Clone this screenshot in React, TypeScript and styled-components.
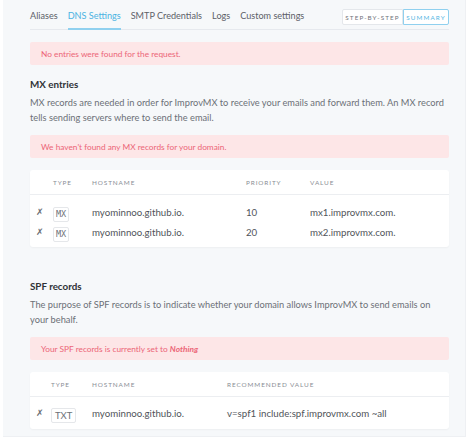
import React from "react";
import styled, { createGlobalStyle } from "styled-components";

const Global = createGlobalStyle`
  html, body { margin: 0; padding: 0; background: #ffffff; }
  body { font-family: Lato, "Liberation Sans", sans-serif; -webkit-font-smoothing: antialiased; }
`;

const Panel = styled.div`
  margin-left: 3px;
  width: 463px;
  height: 437px;
  box-sizing: border-box;
  background: #f6f8fa;
  border-right: 1px solid #eef0f3;
  border-bottom: 1px solid #eef0f3;
  padding: 0 16px 0 27px;
  overflow: hidden;
`;

const TabBar = styled.div`
  display: flex;
  align-items: flex-end;
  justify-content: space-between;
  height: 29px;
  border-bottom: 1px solid #e6e9ee;
`;

const Tabs = styled.div`
  display: flex;
  gap: 10px;
`;

const Tab = styled.div<{ $active?: boolean }>`
  font-size: 9.1px;
  line-height: 12px;
  white-space: nowrap;
  padding: 5px 0 6px;
  color: ${(p) => (p.$active ? "#4bb3e2" : "#5d6168")};
  border-bottom: 2px solid ${(p) => (p.$active ? "#8fd0ef" : "transparent")};
  margin-bottom: -1px;
`;

const Toggle = styled.div`
  display: flex;
  align-self: flex-start;
  margin-top: 9px;
`;

const ToggleBtn = styled.div<{ $active?: boolean; $w: number }>`
  width: ${(p) => p.$w}px;
  height: 16px;
  box-sizing: border-box;
  display: flex;
  align-items: center;
  justify-content: center;
  white-space: nowrap;
  font-size: 6.3px;
  letter-spacing: 1.1px;
  font-weight: 400;
  background: #ffffff;
  color: ${(p) => (p.$active ? "#52b6e3" : "#6f737a")};
  border: 1px solid ${(p) => (p.$active ? "#8fd0ef" : "#e4e7eb")};
  border-radius: ${(p) => (p.$active ? "0 2px 2px 0" : "2px 0 0 2px")};
`;

const Alert = styled.div<{ $mt: number }>`
  margin-top: ${(p) => p.$mt}px;
  background: #fde6e7;
  color: #ec6577;
  font-size: 8.3px;
  line-height: 12px;
  padding: 6px 11px;
  height: 23px;
  box-sizing: border-box;
  display: flex;
  align-items: center;
  white-space: pre;
  border-radius: 2px;
  em { font-weight: 700; }
`;

const Heading = styled.h3<{ $mt: number }>`
  margin: ${(p) => p.$mt}px 0 0;
  font-size: 9.8px;
  line-height: 14px;
  font-weight: 700;
  color: #2f3237;
`;

const Para = styled.p`
  margin: 4px 0 0;
  font-size: 9.25px;
  line-height: 15px;
  color: #6c7077;
`;

const Card = styled.div`
  margin-top: 12px;
  background: #ffffff;
  border-radius: 3px;
  box-shadow: 0 1px 2px rgba(0, 0, 0, 0.04);
  padding-bottom: 6px;
`;

const Row = styled.div<{ $cols: string; $head?: boolean }>`
  display: grid;
  grid-template-columns: ${(p) => p.$cols};
  align-items: center;
  height: ${(p) => (p.$head ? "24px" : "20px")};
  ${(p) => (p.$head ? "border-bottom: 1px solid #eceef1; margin-bottom: 6px;" : "")}
`;

const Th = styled.div`
  font-size: 6.4px;
  letter-spacing: 0.9px;
  color: #8a8e95;
  text-transform: uppercase;
  white-space: nowrap;
`;

const Td = styled.div`
  font-size: 9.7px;
  color: #50545a;
  white-space: nowrap;
`;

const Cross = styled.div`
  padding-left: 6px;
  font-size: 9px;
  color: #6a6e74;
  font-family: "DejaVu Sans", sans-serif;
`;

const Badge = styled.span`
  display: inline-block;
  font-family: "DejaVu Sans Mono", "Liberation Mono", monospace;
  font-size: 8.5px;
  line-height: 11px;
  padding: 1px 2px;
  border: 1px solid #e5e7ea;
  border-radius: 2px;
  color: #6d7177;
`;

const BadgeTxt = styled(Badge)`
  font-family: Lato, "Liberation Sans", sans-serif;
  font-size: 9.5px;
  padding: 1px 3px;
`;

const mxCols = "23px 39px 154px 64px 1fr";
const spfCols = "21px 41px 135px 1fr";

const mxRows = [
  { host: "myominnoo.github.io.", prio: "10", value: "mx1.improvmx.com." },
  { host: "myominnoo.github.io.", prio: "20", value: "mx2.improvmx.com." },
];

export default function App() {
  return (
    <>
      <Global />
      <Panel>
        <TabBar>
          <Tabs>
            <Tab>Aliases</Tab>
            <Tab $active>DNS Settings</Tab>
            <Tab>SMTP Credentials</Tab>
            <Tab>Logs</Tab>
            <Tab>Custom settings</Tab>
          </Tabs>
          <Toggle>
            <ToggleBtn $w={61}>STEP-BY-STEP</ToggleBtn>
            <ToggleBtn $w={46} $active>SUMMARY</ToggleBtn>
          </Toggle>
        </TabBar>

        <Alert $mt={12}>No entries were found for the request.</Alert>

        <Heading $mt={12}>MX entries</Heading>
        <Para>
          MX records are needed in order for ImprovMX to receive your emails and forward them. An MX record
          tells sending servers where to send the email.
        </Para>
        <Alert $mt={10}>We haven't found any MX records for your domain.</Alert>
        <Card>
          <Row $cols={mxCols} $head>
            <div />
            <Th>Type</Th>
            <Th>Hostname</Th>
            <Th>Priority</Th>
            <Th>Value</Th>
          </Row>
          {mxRows.map((r) => (
            <Row $cols={mxCols} key={r.value}>
              <Cross>✗</Cross>
              <div>
                <Badge>MX</Badge>
              </div>
              <Td>{r.host}</Td>
              <Td>{r.prio}</Td>
              <Td>{r.value}</Td>
            </Row>
          ))}
        </Card>

        <Heading $mt={32}>SPF records</Heading>
        <Para>
          The purpose of SPF records is to indicate whether your domain allows ImprovMX to send emails on
          your behalf.
        </Para>
        <Alert $mt={10}>
          Your SPF records is currently set to <em>Nothing</em>
        </Alert>
        <Card>
          <Row $cols={spfCols} $head>
            <div />
            <Th>Type</Th>
            <Th>Hostname</Th>
            <Th>Recommended value</Th>
          </Row>
          <Row $cols={spfCols}>
            <Cross>✗</Cross>
            <div>
              <BadgeTxt>TXT</BadgeTxt>
            </div>
            <Td>myominnoo.github.io.</Td>
            <Td>v=spf1 include:spf.improvmx.com ~all</Td>
          </Row>
        </Card>
      </Panel>
    </>
  );
}
